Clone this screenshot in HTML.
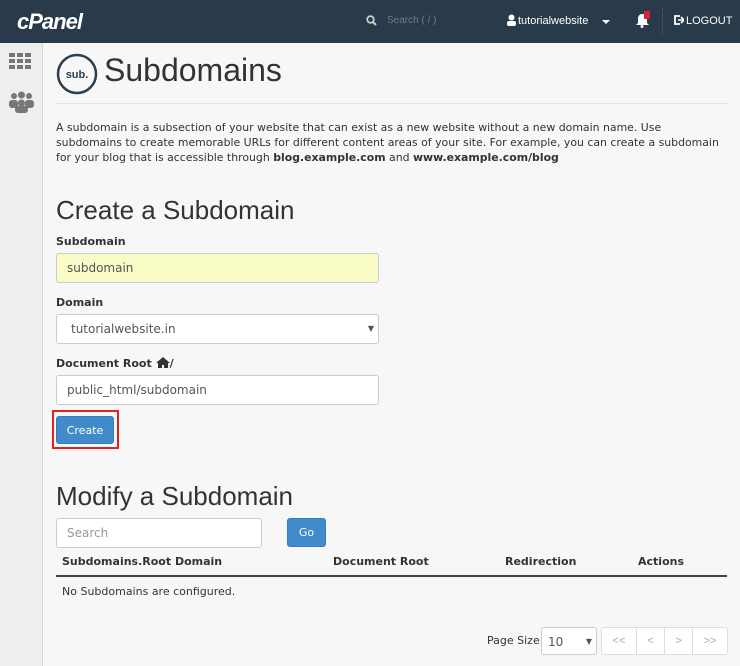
<!DOCTYPE html>
<html><head><meta charset="utf-8"><style>
*{box-sizing:border-box;margin:0;padding:0}
body{width:740px;height:666px;overflow:hidden;background:#f7f7f7;font-family:"Liberation Sans",sans-serif;color:#333;position:relative}
.top{position:absolute;left:0;top:0;width:740px;height:43px;background:#293a4a;color:#fff}
.side{position:absolute;left:0;top:43px;width:43px;height:623px;background:#eceeef;border-right:1px solid #d6d6d6}
.abs{position:absolute}
.inp{position:absolute;height:30px;border:1px solid #ccc;border-radius:3px;background:#fff;font-size:12px;color:#555;padding:0 10px;line-height:28px;font-family:"DejaVu Sans",sans-serif}
.lbl{position:absolute;font-size:11px;font-weight:bold;color:#333;font-family:"DejaVu Sans",sans-serif}
.btn{position:absolute;background:#428bca;color:#fff;font-size:11px;text-align:center;border-radius:3px;border:1px solid #357ebd;font-family:"DejaVu Sans",sans-serif}
.th{position:absolute;top:555px;font-size:11px;font-weight:bold;font-family:"DejaVu Sans",sans-serif}
.h{position:absolute;color:#333;font-weight:normal}
</style></head><body>
<div class="top">
<div class="abs" style="left:17px;top:9px;font-size:22px;font-style:italic;font-weight:bold;letter-spacing:-1px">cPanel</div>
<svg class="abs" style="left:366px;top:15px" width="11" height="11"><circle cx="4.5" cy="4.5" r="3.3" stroke="#ccc" stroke-width="1.8" fill="none"/><path d="M7 7l3 3" stroke="#ccc" stroke-width="2"/></svg>
<div class="abs" style="left:387px;top:15px;font-size:10px;color:#6f7c88">Search ( / )</div>
<svg class="abs" style="left:507px;top:14px" width="9" height="12"><circle cx="4.5" cy="3.5" r="3" fill="#fff"/><rect x="0" y="7" width="9" height="5" rx="2" fill="#fff"/></svg>
<div class="abs" style="left:518px;top:15px;font-size:11px">tutorialwebsite</div>
<div class="abs" style="left:602px;top:20px;border:4px solid transparent;border-top-color:#fff"></div>
<svg class="abs" style="left:635px;top:11px" width="16" height="18"><path d="M7 3c-3 0-4 3-4 5v4l-2 2h13l-2-2V8c0-2-1-5-4-5z" fill="#fff"/><circle cx="7" cy="15.5" r="1.5" fill="#fff"/><rect x="9" y="0" width="6" height="8" fill="#d9232e"/></svg>
<div class="abs" style="left:662px;top:8px;width:1px;height:28px;border-left:1px dotted #506070"></div>
<svg class="abs" style="left:674px;top:15px" width="10" height="10"><path d="M6 1H1v8h5" stroke="#fff" stroke-width="1.8" fill="none"/><path d="M4 5h6M7 2l3 3-3 3" stroke="#fff" stroke-width="1.6" fill="none"/></svg>
<div class="abs" style="left:686px;top:15px;font-size:11px">LOGOUT</div>
</div>
<div class="side">
<svg class="abs" style="left:9px;top:10px" width="24" height="18"><g fill="#777"><rect x="0" y="0" width="6" height="4"/><rect x="8" y="0" width="6" height="4"/><rect x="16" y="0" width="6" height="4"/><rect x="0" y="6" width="6" height="4"/><rect x="8" y="6" width="6" height="4"/><rect x="16" y="6" width="6" height="4"/><rect x="0" y="12" width="6" height="4"/><rect x="8" y="12" width="6" height="4"/><rect x="16" y="12" width="6" height="4"/></g></svg>
<svg class="abs" style="left:9px;top:48px" width="25" height="22"><g fill="#777"><circle cx="5" cy="5" r="3"/><circle cx="12.5" cy="4" r="3.5"/><circle cx="20" cy="5" r="3"/><rect x="0" y="9" width="9" height="8" rx="3"/><rect x="16" y="9" width="9" height="8" rx="3"/><circle cx="12.5" cy="12" r="3.5"/><rect x="6" y="15" width="13" height="7" rx="3"/></g></svg>
</div>
<svg class="abs" style="left:56px;top:53px" width="42" height="42"><circle cx="21" cy="21" r="19" stroke="#2d3e4e" stroke-width="2.5" fill="none"/><text x="21" y="25" font-size="11" font-weight="bold" text-anchor="middle" fill="#2d3e4e" font-family="Liberation Sans">sub.</text></svg>
<div class="h" style="left:104px;top:52px;font-size:32px">Subdomains</div>
<div class="abs" style="left:56px;top:103px;width:672px;border-top:1px solid #e5e5e5"></div>
<div class="abs" style="left:56px;top:120px;width:666px;font-size:10.9px;line-height:15px;color:#333;font-family:'DejaVu Sans',sans-serif">A subdomain is a subsection of your website that can exist as a new website without a new domain name. Use subdomains to create memorable URLs for different content areas of your site. For example, you can create a subdomain for your blog that is accessible through <b>blog.example.com</b> and <b>www.example.com/blog</b></div>
<div class="h" style="left:56px;top:195px;font-size:26px">Create a Subdomain</div>
<div class="lbl" style="left:56px;top:235px">Subdomain</div>
<div class="inp" style="left:56px;top:253px;width:323px;background:#fafcc8">subdomain</div>
<div class="lbl" style="left:56px;top:296px">Domain</div>
<div class="inp" style="left:56px;top:314px;width:323px;padding-left:14px">tutorialwebsite.in<span style="position:absolute;right:4px;font-size:8px">▼</span></div>
<div class="lbl" style="left:56px;top:357px">Document Root <svg width="14" height="11" style="vertical-align:-1px"><path d="M7 0L0 6h2v5h4V8h2v3h4V6h2z" fill="#333"/></svg>/</div>
<div class="inp" style="left:56px;top:375px;width:323px">public_html/subdomain</div>
<div class="abs" style="left:52px;top:410px;width:67px;height:39px;border:2px solid #e3231b"></div>
<div class="btn" style="left:56px;top:416px;width:58px;height:28px;line-height:27px">Create</div>
<div class="h" style="left:56px;top:481px;font-size:26px">Modify a Subdomain</div>
<div class="inp" style="left:56px;top:518px;width:206px;color:#999">Search</div>
<div class="btn" style="left:287px;top:518px;width:39px;height:29px;line-height:28px">Go</div>
<div class="th" style="left:62px">Subdomains.Root Domain</div>
<div class="th" style="left:333px">Document Root</div>
<div class="th" style="left:505px">Redirection</div>
<div class="th" style="left:638px">Actions</div>
<div class="abs" style="left:56px;top:575px;width:671px;border-top:2px solid #444"></div>
<div class="abs" style="left:62px;top:585px;font-size:11px;font-family:'DejaVu Sans',sans-serif">No Subdomains are configured.</div>
<div class="abs" style="left:487px;top:634px;font-size:11px;font-family:'DejaVu Sans',sans-serif">Page Size</div>
<div class="inp" style="left:541px;top:627px;width:56px;height:28px;padding-left:6px">10<span style="position:absolute;right:4px;font-size:8px">▼</span></div>
<div class="abs" style="left:601px;top:627px;width:127px;height:28px;border:1px solid #ddd;border-radius:3px;background:#fff;font-size:11px;color:#aaa;display:flex">
<span style="flex:1;text-align:center;line-height:26px;border-right:1px solid #ddd">&lt;&lt;</span><span style="flex:.8;text-align:center;line-height:26px;border-right:1px solid #ddd">&lt;</span><span style="flex:.8;text-align:center;line-height:26px;border-right:1px solid #ddd">&gt;</span><span style="flex:1;text-align:center;line-height:26px">&gt;&gt;</span></div>
</body></html>
